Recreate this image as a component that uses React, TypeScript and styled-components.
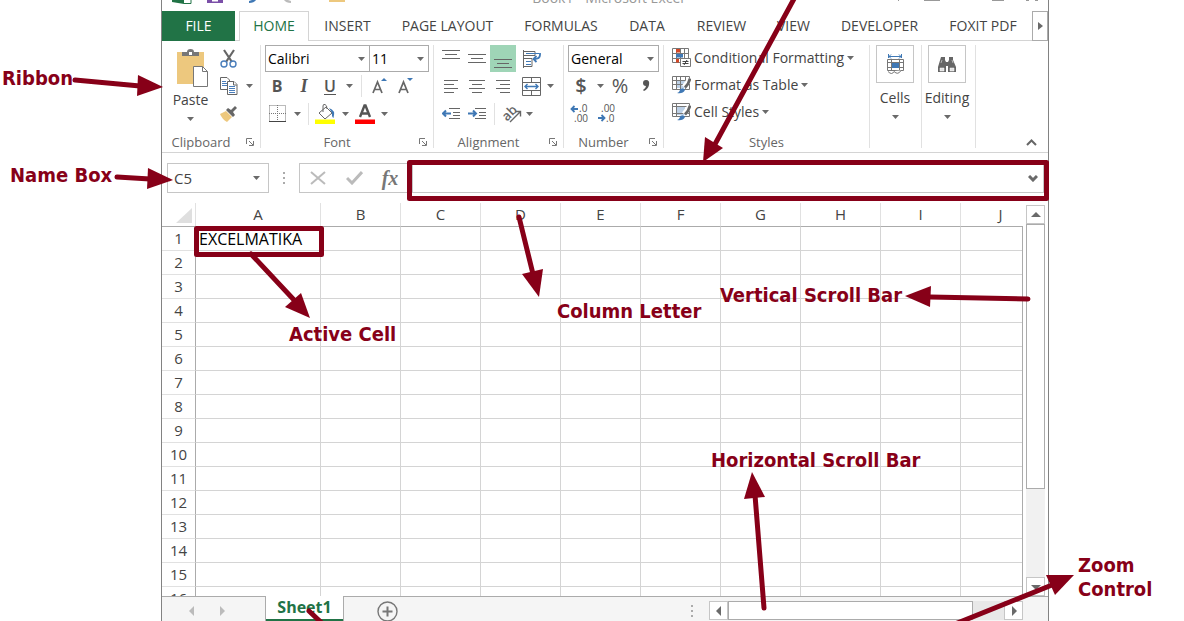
import React from "react";
import styled, { createGlobalStyle } from "styled-components";

const ui = `"Open Sans", "Noto Sans", sans-serif`;
const crimson = "#870018";
const green = "#217346";

const GlobalStyle = createGlobalStyle`
  *, *::before, *::after { box-sizing: border-box; }
  body { margin: 0; background: #fff; font-family: ${ui}; font-size: 14px; color: #444; overflow: hidden; }
  button, input, select { font: inherit; color: inherit; margin: 0; padding: 0; border: 0; background: none; border-radius: 0; outline: 0; }
  svg { display: block; flex: none; }
`;

const Page = styled.main`
  position: relative;
  height: 100vh;
  padding: 0 135px 0 161px;
  overflow: hidden;
`;

const Workbook = styled.section`
  display: flex;
  flex-direction: column;
  height: 100%;
  border: solid #828282;
  border-width: 0 1px;
`;

const TitleBar = styled.header`
  display: flex;
  justify-content: space-between;
  flex: none;
  height: 11px;
  padding: 0 8px;
  overflow: hidden;
  align-items: flex-start;
`;

const TitleText = styled.span`
  display: flex;
  align-items: flex-end;
  height: 8px;
  line-height: 20px;
  color: #999;
  margin-left: -20px;
`;

const TabStrip = styled.nav`
  display: flex;
  flex: none;
  height: 30px;
  border-bottom: 1px solid #d4d4d4;
`;

const FileTab = styled.button`
  width: 73px;
  height: 30px;
  padding-bottom: 2px;
  background: ${green};
  color: #fff;
  margin-right: 4px;
`;

const Tab = styled.button<{ $w: number; $active?: boolean }>`
  width: ${(p) => p.$w}px;
  height: 30px;
  padding-bottom: 2px;
  flex: none;
  white-space: nowrap;
  color: ${(p) => (p.$active ? green : "#444")};
  border: ${(p) => (p.$active ? "1px solid #d4d4d4" : "0")};
  border-bottom: 0;
  background: ${(p) => (p.$active ? "#fff" : "transparent")};
`;

const TabScroll = styled.button`
  display: grid;
  place-items: center;
  width: 16px;
  height: 30px;
  margin-left: auto;
  border: 1px solid #ababab;
`;

const Ribbon = styled.div`
  display: flex;
  flex: none;
  height: 112px;
  padding-top: 4px;
  border-bottom: 1px solid #d4d4d4;
`;

const Group = styled.section<{ $w: number }>`
  display: flex;
  flex-direction: column;
  width: ${(p) => p.$w}px;
  height: 103px;
  flex: none;
  border-right: 1px solid #e1e1e1;
`;

const GroupBody = styled.div<{ $row?: boolean }>`
  display: flex;
  flex: 1;
  flex-direction: ${(p) => (p.$row ? "row" : "column")};
  padding: 0 4px;
`;

const GroupFooter = styled.footer`
  display: flex;
  align-items: center;
  height: 12px;
  font-size: 13px;
  line-height: 12px;
  color: #666;
`;

const GroupName = styled.span`
  flex: 1;
  text-align: center;
`;

const Launcher = styled.button`
  display: grid;
  place-items: center;
  width: 20px;
  height: 12px;
`;

const ToolRow = styled.div<{ $h?: number }>`
  display: flex;
  align-items: center;
  height: ${(p) => p.$h ?? 28}px;
`;

const Tool = styled.button<{ $w?: number; $on?: boolean }>`
  display: flex;
  align-items: center;
  justify-content: center;
  width: ${(p) => p.$w ?? 26}px;
  height: 27px;
  flex: none;
  background: ${(p) => (p.$on ? "#9fd5b7" : "transparent")};
`;

const Glyph = styled.span<{ $size?: number }>`
  font-size: ${(p) => p.$size ?? 16}px;
  line-height: 24px;
  color: #555;
  font-weight: 700;
  &.italic { font-family: "Liberation Serif", serif; font-style: italic; }
  &.underline { border-bottom: 1px solid #555; line-height: 16px; font-weight: 600; }
  &.plain { font-weight: 400; }
  &.medium { font-weight: 600; }
`;

const Divider = styled.i<{ $gap: number }>`
  width: 1px;
  height: 22px;
  margin: 0 ${(p) => p.$gap}px;
  background: #e1e1e1;
`;

const Picker = styled.label<{ $w: number }>`
  display: flex;
  align-items: center;
  width: ${(p) => p.$w}px;
  height: 27px;
  padding-right: 4px;
  border: 1px solid #ababab;
  color: #000;
  & + & { border-left: 0; }
  select { appearance: none; flex: 1; min-width: 0; height: 25px; padding-left: 2px; }
`;

const PasteButton = styled.button`
  display: flex;
  flex-direction: column;
  align-items: center;
  width: 49px;
  padding-top: 4px;
  line-height: 22px;
`;

const PasteCaret = styled.span`
  padding-top: 6px;
`;

const Stack = styled.div`
  padding-left: 1px;
`;

const StyleCommand = styled.button`
  display: flex;
  align-items: center;
  gap: 3px;
  height: 27px;
  padding: 0 0 2px 4px;
  white-space: nowrap;
`;

const BigButton = styled.button`
  display: flex;
  flex-direction: column;
  align-items: center;
  width: 50px;
  line-height: 20px;
`;

const BigIcon = styled.span`
  display: grid;
  place-items: center;
  width: 38px;
  height: 38px;
  margin-bottom: 5px;
  border: 1px solid #c6c6c6;
`;

const BigCaret = styled.span`
  padding-top: 7px;
`;

const Collapse = styled.button`
  display: grid;
  place-items: center;
  align-self: flex-end;
  width: 20px;
  height: 20px;
  margin: 0 7px 0 auto;
`;

const FormulaBar = styled.div`
  display: flex;
  align-items: center;
  flex: none;
  height: 50px;
  padding: 0 4px 0 5px;
`;

const NameBox = styled.label`
  display: flex;
  align-items: center;
  width: 102px;
  height: 30px;
  padding: 0 8px 0 6px;
  border: 1px solid #c6c6c6;
  font-size: 15px;
  input { flex: 1; min-width: 0; }
`;

const Grip = styled.span`
  display: grid;
  place-items: center;
  width: 30px;
`;

const FormulaBox = styled.div`
  display: flex;
  flex: 1;
  align-items: center;
  height: 30px;
  border: 1px solid #c6c6c6;
  input { flex: 1; min-width: 0; padding: 0 8px; height: 28px; border-left: 1px solid #c6c6c6; }
`;

const FormulaTool = styled.button`
  display: grid;
  place-items: center;
  width: 36px;
  height: 28px;
`;

const FxTool = styled(FormulaTool)`
  font: italic 700 20px/26px "Liberation Serif", serif;
  color: #777;
  margin-right: 4px;
`;

const Expand = styled.button`
  display: grid;
  place-items: center;
  width: 20px;
  height: 28px;
`;

const SheetArea = styled.div`
  display: flex;
  flex: 1;
  min-height: 0;
`;

const GridView = styled.div`
  position: relative;
  flex: 1;
  min-width: 0;
  overflow: hidden;
  &::after { content: ""; position: absolute; top: 23px; right: 0; bottom: 0; width: 1px; background: #ababab; }
`;

const Grid = styled.table`
  table-layout: fixed;
  width: 879px;
  border-spacing: 0;
  line-height: 20px;
  th, td { height: 24px; padding: 0; border: solid #d4d4d4; border-width: 0 1px 1px 0; }
  th { padding-bottom: 2px; font-weight: 400; font-size: 15px; color: #444; }
  thead th { border-bottom-color: #ababab; border-right-color: #e1e1e1; }
  tbody th { border-right-color: #ababab; border-bottom-color: #e1e1e1; }
  td { padding-left: 3px; color: #000; font-size: 16px; white-space: nowrap; }
`;

const Corner = styled.th`
  svg { margin: 4px 0 0 14px; }
`;

const VScroll = styled.div`
  display: flex;
  flex-direction: column;
  width: 19px;
  margin: 2px 3px 0 3px;
  background: #f1f1f1;
`;

const ScrollButton = styled.button`
  display: grid;
  place-items: center;
  flex: none;
  width: 19px;
  height: 19px;
  border: 1px solid #c6c6c6;
  background: #fff;
`;

const VThumb = styled.div`
  height: 265px;
  margin-bottom: auto;
  border: 1px solid #ababab;
  background: #fff;
`;

const BottomBar = styled.footer`
  display: flex;
  flex: none;
  height: 25px;
  border-top: 1px solid #ababab;
  background: #f5f5f5;
`;

const SheetNav = styled.div`
  display: flex;
  align-items: center;
  width: 103px;
  padding: 3px 0 0 25px;
  gap: 20px;
`;

const SheetTab = styled.button`
  width: 79px;
  height: 25px;
  margin-top: -1px;
  padding-bottom: 4px;
  border: solid #ababab;
  border-width: 0 1px;
  box-shadow: inset 0 -2px ${green};
  background: #fff;
  color: ${green};
  font-size: 16px;
  font-weight: 700;
  line-height: 20px;
`;

const AddSheet = styled.button`
  display: grid;
  place-items: center;
  width: 22px;
  height: 24px;
  margin: 2px 0 0 32px;
`;

const HScroll = styled.div`
  display: flex;
  width: 314px;
  height: 19px;
  margin: 4px 25px 0 2px;
  background: #e8e8e8;
`;

const HThumb = styled.div`
  width: 245px;
  margin-right: auto;
  border: 1px solid #ababab;
  background: #fff;
`;

const BarGrip = styled(Grip)`
  margin-left: auto;
  padding-top: 4px;
`;

const Markup = styled.svg`
  position: absolute;
  left: 0;
  top: 0;
  overflow: visible;
  pointer-events: none;
`;

const Note = styled.strong<{ $x: number; $y: number; $w?: number }>`
  position: absolute;
  left: ${(p) => p.$x}px;
  top: ${(p) => p.$y}px;
  width: ${(p) => (p.$w ? `${p.$w}px` : "auto")};
  white-space: ${(p) => (p.$w ? "normal" : "nowrap")};
  font: 700 20px/24px "DejaVu Sans Condensed", "Noto Sans", sans-serif;
  color: ${crimson};
`;

const Caret = () => (
  <svg width="7" height="4"><path d="M0 0h7L3.5 4z" fill="#6a6a6a" /></svg>
);

const Triangle = ({ dir, color = "#6a6a6a" }: { dir: "up" | "down" | "left" | "right"; color?: string }) => {
  const d = { up: "M0 7L5 2l5 5z", down: "M0 3h10L5 8z", left: "M7 0v10L2 5z", right: "M3 0v10l5-5z" }[dir];
  return <svg width="10" height="10"><path d={d} fill={color} /></svg>;
};

const Dots = () => (
  <svg width="3" height="12" fill="#ababab"><path d="M0 0h2v2H0zM0 5h2v2H0zM0 10h2v2H0z" /></svg>
);

const LauncherIcon = () => (
  <svg width="8" height="8" fill="none" stroke="#777"><path d="M.5 6V.5H6M3 3l4 4M7.500 3v4.500H3" /></svg>
);

const Lines = ({ rows, y = 0 }: { rows: [number, number][]; y?: number }) => (
  <svg width="18" height="22" stroke="#666" fill="none">
    {rows.map(([a, b], i) => <path key={i} d={`M${a} ${y + i * 4 + 0.5}H${b}`} />)}
  </svg>
);

const PasteIcon = () => (
  <svg width="35" height="40">
    <path d="M4 3h27v32H4z" fill="#edc87e" />
    <path d="M9 7V3h5q0-3 3.500-3T21 3h5v4z" fill="#777" />
    <path d="M16 3h3v3h-3z" fill="#fff" />
    <path d="M20.500 17.500h9l5 5v15h-14z" fill="#fff" stroke="#777" />
    <path d="M29.500 17.500v5h5" fill="none" stroke="#777" />
  </svg>
);

const CutIcon = () => (
  <svg width="18" height="20" fill="none">
    <path d="M4 1l8 12M14 1L6 13" stroke="#666" strokeWidth="2.200" />
    <circle cx="4" cy="15" r="3" stroke="#4a7ebb" strokeWidth="1.400" />
    <circle cx="13" cy="15" r="3" stroke="#4a7ebb" strokeWidth="1.400" />
  </svg>
);

const CopyIcon = () => (
  <svg width="18" height="18" fill="#fff" stroke="#666">
    <path d="M.5.500H7L9.500 3v9.500h-9z" />
    <path d="M2 4.500h4M2 6.500h5M2 8.500h5" stroke="#4a7ebb" />
    <path d="M7.500 4.500H14l3 3v10H7.500z" /><path d="M13.500 4.500v3.500h3.500" />
    <path d="M9 9.500h6M9 11.500h6M9 13.500h6M9 15.500h6" stroke="#4a7ebb" />
  </svg>
);

const PainterIcon = () => (
  <svg width="18" height="16">
    <path d="M0 8l6-3 6 6-5 5q-5-3-7-8z" fill="#edc87e" />
    <path d="M6 4l2-2 3 2 4-4 2 2-4 4 2 3-2 2z" fill="#666" />
  </svg>
);

const BordersIcon = () => (
  <svg width="17" height="18" fill="none" stroke="#777">
    <path d="M.5.500h16v16M.5.500v16M8.500 0v17M0 8.500h17" strokeDasharray="1 1" />
    <path d="M0 16.500h17" stroke="#444" />
  </svg>
);

const FillIcon = () => (
  <svg width="21" height="20">
    <path d="M4 9l7-6 6 6-7 6z" fill="#fff" stroke="#666" />
    <path d="M8 8V2q0-2 2-1.500T12 5" fill="none" stroke="#666" />
    <path d="M14 4q7 2 4.500 10-2-1-1.500-5z" fill="#3f78b5" />
    <path d="M0 15.500h20v4.500H0z" fill="#ff0" />
  </svg>
);

const FontColorIcon = () => (
  <svg width="20" height="20">
    <path d="M5 13L9.500 1.500h1L15 13M7 9.500h6" fill="none" stroke="#555" strokeWidth="2.400" />
    <path d="M0 15.500h20v4.500H0z" fill="#f00" />
  </svg>
);

const GrowFont = ({ down = false }: { down?: boolean }) => (
  <svg width="16" height="18" fill="none">
    <path d="M2 16L6.500 5 11 16M4 12.500h5" stroke="#666" strokeWidth="1.700" />
    <path d={down ? "M10 1h6l-3 3z" : "M10 4h6l-3-3z"} fill="#3f78b5" />
  </svg>
);

const WrapIcon = () => (
  <svg width="20" height="20" fill="none" stroke="#666">
    <path d="M1.500 1v18M2 2.500h11v4H2M2 9.500h8v8H2" />
    <path d="M4 4.500h13M4 12.500h5M4 15.500h5" stroke="#3f78b5" />
    <path d="M18 4v2q0 4-6 4M14.500 7L11.500 10l3 3" stroke="#3f78b5" strokeWidth="1.800" />
  </svg>
);

const MergeIcon = () => (
  <svg width="19" height="19" fill="none" stroke="#666">
    <path d="M.5.500h18v18H.5zM.5 5.500h18M.5 13.500h18M9.500 0v5M9.500 14v5" />
    <path d="M3 9.500h13M5.500 7L3 9.500 5.500 12M13.500 7L16 9.500 13.500 12" stroke="#3f78b5" strokeWidth="1.400" />
  </svg>
);

const IndentIcon = ({ right = false }: { right?: boolean }) => (
  <svg width="18" height="14" fill="none" stroke="#666">
    <path d="M7 1.500h11M11 5.500h7M11 8.500h7M7 11.500h11" />
    <path d={right ? "M0 6.500h8M5 3.500l3 3-3 3" : "M9 6.500H1M4 3.500l-3 3 3 3"} stroke="#3f78b5" strokeWidth="2" />
  </svg>
);

const OrientationIcon = () => (
  <svg width="22" height="22" overflow="visible">
    <text x="2" y="17" transform="rotate(-45 6 13)" fontSize="13" fontWeight="600" fill="#666">ab</text>
    <path d="M9 19L19 9M14.500 8.500H19.500V13.500" fill="none" stroke="#666" strokeWidth="1.400" />
  </svg>
);

const DecimalIcon = ({ less = false }: { less?: boolean }) => (
  <svg width="20" height="24" fill="#555" fontSize="10" overflow="visible">
    <text x={less ? 4 : 8} y="10">{less ? ".00" : ".0"}</text>
    <text x={less ? 9 : 3} y="20">{less ? ".0" : ".00"}</text>
    <path d={less ? "M1 16h6M4.500 13l3 3-3 3" : "M7 7H1M3.500 4l-3 3 3 3"} fill="none" stroke="#3f78b5" strokeWidth="1.800" />
  </svg>
);

const ConditionalIcon = () => (
  <svg width="19" height="19" fill="none" stroke="#777">
    <path d="M.5.500h16v14H.5zM.5 5.500h16M.5 10.500h16M4.500 0v15M8.500 0v15M12.500 0v15" />
    <path d="M4 1h4v3.500H4zM4 11h3v3.500H4z" fill="#d24726" stroke="none" />
    <path d="M4 6h7v3.500H4z" fill="#3f78b5" stroke="none" />
    <path d="M8.500 10.500h10v8h-10z" fill="#fff" /><path d="M10.500 13.500h6M10.500 15.500h6M15 12l-3 5" stroke="#444" />
  </svg>
);

const StyleIcon = ({ table = false }: { table?: boolean }) => (
  <svg width="19" height="19" fill="none" stroke="#777">
    <path d="M.5 1.500h17v13H.5z" />
    <path d="M5 5h8v8H5z" fill="#bcd0e6" stroke="none" />
    <path d={table ? "M.5 5.500h17M.5 9.500h17M4.500 1v14M8.500 1v14M13.500 1v14" : "M.5 4.500h17M4.500 1v14M.5 11.500h17"} />
    <path d="M18 4l-6 8" stroke="#fff" strokeWidth="5" /><path d="M18 3.500q-1 5-5 9" stroke="#666" strokeWidth="2.800" />
    <path d="M5 18q3-1 3-4 4-2 5 1-2 4-8 3z" fill="#3f78b5" stroke="none" />
  </svg>
);

const CellsIcon = () => (
  <svg width="19" height="21" fill="none" stroke="#777">
    <path d="M2.500 0v4M15.500 0v4M3 2.500h12M5 .5l-2 2 2 2M13 .5l2 2-2 2" stroke="#3f78b5" />
    <path d="M1.500 5.500h16v11h-16zM1.500 8.500h16M1.500 13.500h16M5.500 5v12M13.500 5v12" />
    <path d="M6 9h7v5H6z" fill="#3f78b5" stroke="none" />
    <path d="M2 17.500q4 4 6 0 4 4 7-1" fill="#fff" />
  </svg>
);

const FindIcon = () => (
  <svg width="18" height="17" fill="#666">
    <path d="M3 1h4v3l1 2v10H0v-5zM11 1h4v3l3 7v5h-8V6l1-2zM7 6h4v4H7z" />
    <path d="M2 12h4v3H2zM12 12h4v3h-4zM4 4l-1 3M14 4l1 3" fill="#fff" stroke="#fff" strokeWidth=".5" fillOpacity=".8" />
  </svg>
);

const arrows: { line: string; head: string }[] = [
  { line: "M75 80L140 86", head: "163,87 138,75 137,96" },
  { line: "M117 177L150 179", head: "173,180 148,168 147,189" },
  { line: "M795 -3L714 146", head: "703,162 705,137 723,148" },
  { line: "M251 254L295 301", head: "310,318 301,293 285,307" },
  { line: "M519 217L533 274", head: "539,297 522,274 543,269" },
  { line: "M1028 299L930 297", head: "905,296 931,286 930,307" },
  { line: "M764 608L755 495", head: "752,472 744,499 765,497" },
  { line: "M955 624L1052 585", head: "1074,575 1046,575 1055,595" },
  { line: "M309 611L326 627", head: "" },
];

const notes = [
  { text: "Ribbon", x: 2, y: 66 },
  { text: "Name Box", x: 10, y: 163 },
  { text: "Active Cell", x: 289, y: 322 },
  { text: "Column Letter", x: 557, y: 299 },
  { text: "Vertical Scroll Bar", x: 720, y: 283 },
  { text: "Horizontal Scroll Bar", x: 711, y: 448 },
  { text: "Zoom Control", x: 1078, y: 553, w: 90 },
];

const tabs = [
  { name: "HOME", w: 70 }, { name: "INSERT", w: 77 }, { name: "PAGE LAYOUT", w: 123 },
  { name: "FORMULAS", w: 104 }, { name: "DATA", w: 68 }, { name: "REVIEW", w: 81 },
  { name: "VIEW", w: 63 }, { name: "DEVELOPER", w: 109 }, { name: "FOXIT PDF", w: 98 },
];

const columns = "ABCDEFGHIJ".split("");
const rowNumbers = Array.from({ length: 16 }, (_, i) => i + 1);

const Footer = ({ name, launcher = true }: { name: string; launcher?: boolean }) => (
  <GroupFooter>
    <GroupName>{name}</GroupName>
    {launcher && <Launcher aria-label={`${name} settings`}><LauncherIcon /></Launcher>}
  </GroupFooter>
);

export default function App() {
  return (
    <Page>
      <GlobalStyle />
      <Workbook>
        <TitleBar>
          <svg width="176" height="5">
            <path d="M2 0h12v4L2 2z" fill={green} /><path d="M14 3.500h7V0" fill="none" stroke={green} />
            <path d="M37 0h16v3H37z" fill="#7b4fa8" /><path d="M42 0h6v1.500h-6z" fill="#fff" />
            <path d="M79 3q5 0 7-3h-4l-3 1z" fill="#3f78b5" /><path d="M121 3q-5 0-7-3h4l3 1z" fill="#bbb" />
            <path d="M159 0h16v2h-16z" fill="#edc87e" />
          </svg>
          <TitleText>Book1 - Microsoft Excel</TitleText>
          <svg width="150" height="3" stroke="#999"><path d="M8.500 0v1M34 .5h16M102 .5h12M136 .5h3M145 .5h3" /></svg>
        </TitleBar>
        <TabStrip>
          <FileTab>FILE</FileTab>
          {tabs.map((t, i) => <Tab key={t.name} $w={t.w} $active={i === 0}>{t.name}</Tab>)}
          <TabScroll aria-label="More tabs"><svg width="5" height="8"><path d="M0 0v8l5-4z" fill="#6a6a6a" /></svg></TabScroll>
        </TabStrip>
        <Ribbon>
          <Group $w={99}>
            <GroupBody $row>
              <PasteButton><PasteIcon />Paste<PasteCaret><Caret /></PasteCaret></PasteButton>
              <Stack>
                <ToolRow $h={27}><Tool aria-label="Cut"><CutIcon /></Tool></ToolRow>
                <ToolRow><Tool aria-label="Copy"><CopyIcon /></Tool><Tool $w={14} aria-label="Copy options"><Caret /></Tool></ToolRow>
                <ToolRow><Tool aria-label="Format painter"><PainterIcon /></Tool></ToolRow>
              </Stack>
            </GroupBody>
            <Footer name="Clipboard" />
          </Group>
          <Group $w={173}>
            <GroupBody>
              <ToolRow $h={27}>
                <Picker $w={105}><select aria-label="Font"><option>Calibri</option></select><Caret /></Picker>
                <Picker $w={59}><select aria-label="Font size"><option>11</option></select><Caret /></Picker>
              </ToolRow>
              <ToolRow>
                <Tool $w={24}><Glyph>B</Glyph></Tool>
                <Tool $w={30}><Glyph className="italic" $size={18}>I</Glyph></Tool>
                <Tool $w={22}><Glyph className="underline">U</Glyph></Tool>
                <Tool $w={16} aria-label="Underline options"><Caret /></Tool>
                <Divider $gap={4} />
                <Tool aria-label="Grow font"><GrowFont /></Tool>
                <Tool aria-label="Shrink font"><GrowFont down /></Tool>
              </ToolRow>
              <ToolRow>
                <Tool $w={24} aria-label="Borders"><BordersIcon /></Tool>
                <Tool $w={16} aria-label="Border options"><Caret /></Tool>
                <Divider $gap={3} />
                <Tool $w={27} aria-label="Fill color"><FillIcon /></Tool>
                <Tool $w={13} aria-label="Fill options"><Caret /></Tool>
                <Tool aria-label="Font color"><FontColorIcon /></Tool>
                <Tool $w={13} aria-label="Font color options"><Caret /></Tool>
              </ToolRow>
            </GroupBody>
            <Footer name="Font" />
          </Group>
          <Group $w={130}>
            <GroupBody>
              <ToolRow $h={27}>
                <Tool aria-label="Top align"><Lines y={2} rows={[[0, 18], [3, 15], [0, 18]]} /></Tool>
                <Tool aria-label="Middle align"><Lines y={6} rows={[[0, 18], [3, 15], [0, 18]]} /></Tool>
                <Tool $on aria-label="Bottom align"><Lines y={11} rows={[[0, 18], [3, 15], [0, 18]]} /></Tool>
                <Tool $w={32} aria-label="Wrap text"><WrapIcon /></Tool>
              </ToolRow>
              <ToolRow>
                <Tool aria-label="Align left"><Lines y={5} rows={[[2, 16], [2, 12], [2, 16], [2, 12]]} /></Tool>
                <Tool aria-label="Center"><Lines y={5} rows={[[1, 17], [4, 14], [1, 17], [4, 14]]} /></Tool>
                <Tool aria-label="Align right"><Lines y={5} rows={[[2, 16], [6, 16], [2, 16], [6, 16]]} /></Tool>
                <Tool $w={30} aria-label="Merge"><MergeIcon /></Tool>
                <Tool $w={8} aria-label="Merge options"><Caret /></Tool>
              </ToolRow>
              <ToolRow>
                <Tool aria-label="Decrease indent"><IndentIcon /></Tool>
                <Tool aria-label="Increase indent"><IndentIcon right /></Tool>
                <Divider $gap={4} />
                <Tool aria-label="Orientation"><OrientationIcon /></Tool>
                <Tool $w={8} aria-label="Orientation options"><Caret /></Tool>
              </ToolRow>
            </GroupBody>
            <Footer name="Alignment" />
          </Group>
          <Group $w={100}>
            <GroupBody>
              <ToolRow $h={27}>
                <Picker $w={91}><select aria-label="Number format"><option>General</option></select><Caret /></Picker>
              </ToolRow>
              <ToolRow>
                <Tool><Glyph className="medium" $size={20}>$</Glyph></Tool>
                <Tool $w={12} aria-label="Currency options"><Caret /></Tool>
                <Tool $w={28}><Glyph className="plain" $size={20}>%</Glyph></Tool>
                <Tool $w={24} aria-label="Comma style"><svg width="8" height="12"><path d="M1 3q0-3 3-3 4 0 3 5-1 4-5 6l-1-1q3-2 3-4-3 0-3-3z" fill="#555" /></svg></Tool>
              </ToolRow>
              <ToolRow>
                <Tool aria-label="Increase decimal"><DecimalIcon /></Tool>
                <Tool aria-label="Decrease decimal"><DecimalIcon less /></Tool>
              </ToolRow>
            </GroupBody>
            <Footer name="Number" />
          </Group>
          <Group $w={206}>
            <GroupBody>
              <StyleCommand><ConditionalIcon />Conditional Formatting <Caret /></StyleCommand>
              <StyleCommand><StyleIcon table />Format as Table <Caret /></StyleCommand>
              <StyleCommand><StyleIcon />Cell Styles <Caret /></StyleCommand>
            </GroupBody>
            <Footer name="Styles" launcher={false} />
          </Group>
          <Group $w={52}>
            <BigButton><BigIcon><CellsIcon /></BigIcon>Cells<BigCaret><Caret /></BigCaret></BigButton>
          </Group>
          <Group $w={54}>
            <BigButton as="button"><BigIcon><FindIcon /></BigIcon>Editing<BigCaret><Caret /></BigCaret></BigButton>
          </Group>
          <Collapse aria-label="Collapse ribbon"><svg width="11" height="7" fill="none" stroke="#666" strokeWidth="2"><path d="M1 6l4.500-4.500L10 6" /></svg></Collapse>
        </Ribbon>
        <FormulaBar>
          <NameBox><input aria-label="Name box" defaultValue="C5" /><Caret /></NameBox>
          <Grip><Dots /></Grip>
          <FormulaBox>
            <FormulaTool aria-label="Cancel"><svg width="16" height="14" stroke="#bbb" strokeWidth="2"><path d="M1 1l14 12M15 1L1 13" /></svg></FormulaTool>
            <FormulaTool aria-label="Enter"><svg width="17" height="14" fill="none" stroke="#bbb" strokeWidth="3"><path d="M1 7l5 5L16 1" /></svg></FormulaTool>
            <FxTool>fx</FxTool>
            <input aria-label="Formula" />
            <Expand aria-label="Expand formula bar"><svg width="10" height="7" fill="none" stroke="#6a6a6a" strokeWidth="3"><path d="M1 1l4 4 4-4" /></svg></Expand>
          </FormulaBox>
        </FormulaBar>
        <SheetArea>
          <GridView>
            <Grid>
              <colgroup>
                <col width="34" /><col width="125" />
                {columns.slice(1).map((c) => <col key={c} width="80" />)}
              </colgroup>
              <thead>
                <tr>
                  <Corner aria-label="Select all"><svg width="16" height="15"><path d="M16 0v15H0z" fill="#dfdfdf" /></svg></Corner>
                  {columns.map((c) => <th key={c} scope="col">{c}</th>)}
                </tr>
              </thead>
              <tbody>
                {rowNumbers.map((n) => (
                  <tr key={n}>
                    <th scope="row">{n}</th>
                    {columns.map((c) => <td key={c}>{n === 1 && c === "A" ? "EXCELMATIKA" : null}</td>)}
                  </tr>
                ))}
              </tbody>
            </Grid>
          </GridView>
          <VScroll>
            <ScrollButton aria-label="Scroll up"><Triangle dir="up" /></ScrollButton>
            <VThumb />
            <ScrollButton aria-label="Scroll down"><Triangle dir="down" /></ScrollButton>
          </VScroll>
        </SheetArea>
        <BottomBar>
          <SheetNav><Triangle dir="left" color="#bbb" /><Triangle dir="right" color="#bbb" /></SheetNav>
          <SheetTab>Sheet1</SheetTab>
          <AddSheet aria-label="New sheet">
            <svg width="21" height="21" fill="none" stroke="#777"><circle cx="10.500" cy="10.500" r="9.500" strokeWidth="1.400" /><path d="M5.500 10.500h10M10.500 5.500v10" strokeWidth="2" /></svg>
          </AddSheet>
          <BarGrip><Dots /></BarGrip>
          <HScroll>
            <ScrollButton aria-label="Scroll left"><Triangle dir="left" /></ScrollButton>
            <HThumb />
            <ScrollButton aria-label="Scroll right"><Triangle dir="right" /></ScrollButton>
          </HScroll>
        </BottomBar>
      </Workbook>
      <Markup width="1184" height="621" fill="none" stroke={crimson} strokeWidth="5" strokeLinecap="round" strokeLinejoin="round">
        <rect x="409.500" y="162.500" width="637" height="36" />
        <rect x="196.500" y="228.500" width="125" height="26" />
        {arrows.map((a) => (
          <g key={a.line}>
            <path d={a.line} />
            <polygon points={a.head} fill={crimson} stroke="none" />
          </g>
        ))}
      </Markup>
      {notes.map((n) => <Note key={n.text} $x={n.x} $y={n.y} $w={n.w}>{n.text}</Note>)}
    </Page>
  );
}
